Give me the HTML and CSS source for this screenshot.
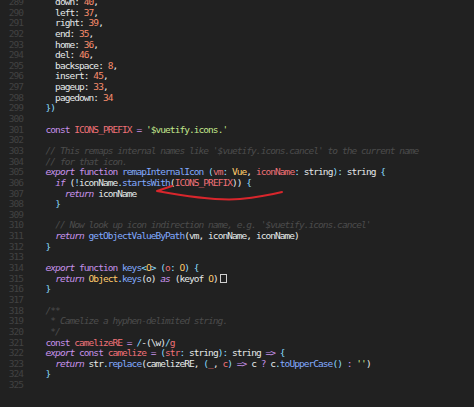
FILE: index.html
```html
<!doctype html>
<html lang="en">
<head>
  <meta charset="UTF-8" />
  <title>helpers.ts</title>
  <link rel="stylesheet" href="styles.css">
</head>
<body>

<section class="screen">
  <div class="editor">
    <div class="line"><span class="num">289</span><span class="code">    down: <span class="n">40</span>,</span></div>
    <div class="line"><span class="num">290</span><span class="code">    left: <span class="n">37</span>,</span></div>
    <div class="line"><span class="num">291</span><span class="code">    right: <span class="n">39</span>,</span></div>
    <div class="line"><span class="num">292</span><span class="code">    end: <span class="n">35</span>,</span></div>
    <div class="line"><span class="num">293</span><span class="code">    home: <span class="n">36</span>,</span></div>
    <div class="line"><span class="num">294</span><span class="code">    del: <span class="n">46</span>,</span></div>
    <div class="line"><span class="num">295</span><span class="code">    backspace: <span class="n">8</span>,</span></div>
    <div class="line"><span class="num">296</span><span class="code">    insert: <span class="n">45</span>,</span></div>
    <div class="line"><span class="num">297</span><span class="code">    pageup: <span class="n">33</span>,</span></div>
    <div class="line"><span class="num">298</span><span class="code">    pagedown: <span class="n">34</span></span></div>
    <div class="line"><span class="num">299</span><span class="code">  <span class="p">})</span></span></div>
    <div class="line"><span class="num">300</span><span class="code"></span></div>
    <div class="line"><span class="num">301</span><span class="code">  <span class="k">const</span> <span class="v">ICONS_PREFIX</span> <span class="k">=</span> <span class="s">'$vuetify.icons.'</span></span></div>
    <div class="line"><span class="num">302</span><span class="code"></span></div>
    <div class="line"><span class="num">303</span><span class="code">  <span class="c">// This remaps internal names like '$vuetify.icons.cancel' to the current name</span></span></div>
    <div class="line"><span class="num">304</span><span class="code">  <span class="c">// for that icon.</span></span></div>
    <div class="line"><span class="num">305</span><span class="code">  <span class="ki">export</span> <span class="k">function</span> <span class="f">remapInternalIcon</span> <span class="p">(</span><span class="v">vm</span><span class="p">:</span> <span class="t">Vue</span>, <span class="v">iconName</span><span class="p">:</span> string<span class="p">):</span> string <span class="p">{</span></span></div>
    <div class="line"><span class="num">306</span><span class="code">    <span class="ki">if</span> (<span class="p">!</span>iconName<span class="p">.</span><span class="f">startsWith</span>(<span class="v">ICONS_PREFIX</span>)) <span class="p">{</span></span></div>
    <div class="line"><span class="num">307</span><span class="code">      <span class="ki">return</span> iconName</span></div>
    <div class="line"><span class="num">308</span><span class="code">    <span class="p">}</span></span></div>
    <div class="line"><span class="num">309</span><span class="code"></span></div>
    <div class="line"><span class="num">310</span><span class="code">    <span class="c">// Now look up icon indirection name, e.g. '$vuetify.icons.cancel'</span></span></div>
    <div class="line"><span class="num">311</span><span class="code">    <span class="ki">return</span> <span class="f">getObjectValueByPath</span>(vm, iconName, iconName)</span></div>
    <div class="line"><span class="num">312</span><span class="code">  <span class="p">}</span></span></div>
    <div class="line"><span class="num">313</span><span class="code"></span></div>
    <div class="line"><span class="num">314</span><span class="code">  <span class="ki">export</span> <span class="k">function</span> <span class="f">keys</span><span class="p">&lt;</span><span class="t">O</span><span class="p">&gt;</span> <span class="p">(</span><span class="v">o</span><span class="p">:</span> <span class="t">O</span><span class="p">)</span> <span class="p">{</span></span></div>
    <div class="line"><span class="num">315</span><span class="code">    <span class="ki">return</span> <span class="t">Object</span><span class="p">.</span><span class="f">keys</span>(o) <span class="ki">as</span> (keyof <span class="t">O</span>)<span class="cursor"></span></span></div>
    <div class="line"><span class="num">316</span><span class="code">  <span class="p">}</span></span></div>
    <div class="line"><span class="num">317</span><span class="code"></span></div>
    <div class="line"><span class="num">318</span><span class="code">  <span class="c">/**</span></span></div>
    <div class="line"><span class="num">319</span><span class="code">  <span class="c"> * Camelize a hyphen-delimited string.</span></span></div>
    <div class="line"><span class="num">320</span><span class="code">  <span class="c"> */</span></span></div>
    <div class="line"><span class="num">321</span><span class="code">  <span class="k">const</span> <span class="v">camelizeRE</span> <span class="k">=</span> <span class="p">/</span>-(\w)<span class="p">/</span><span class="v">g</span></span></div>
    <div class="line"><span class="num">322</span><span class="code">  <span class="ki">export</span> <span class="k">const</span> <span class="v">camelize</span> <span class="k">=</span> <span class="p">(</span><span class="v">str</span><span class="p">:</span> string<span class="p">):</span> string <span class="k">=&gt;</span> <span class="p">{</span></span></div>
    <div class="line"><span class="num">323</span><span class="code">    <span class="ki">return</span> str<span class="p">.</span><span class="f">replace</span>(camelizeRE, <span class="p">(</span><span class="v">_</span>, <span class="v">c</span><span class="p">)</span> <span class="k">=&gt;</span> c <span class="k">?</span> c<span class="p">.</span><span class="f">toUpperCase</span><span class="p">()</span> <span class="k">:</span> <span class="s">''</span>)</span></div>
    <div class="line"><span class="num">324</span><span class="code">  <span class="p">}</span></span></div>
    <div class="line"><span class="num">325</span><span class="code"></span></div>
  </div>

  <!--Red hand-drawn arrow-->
  <svg class="mark" width="474" height="407">
    <path d="M172,186 L157,191 C190,197 220,201 240,199 S270,195 282,192" />
  </svg>
</section>

</body>
</html>
```

FILE: styles.css
```css
html, body {
  margin: 0;
  padding: 0;
  background: #212121;
}
.screen {
  position: relative;
  width: 474px;
  height: 407px;
  overflow: hidden;
  background: #212121;
}
.editor {
  margin-top: -3px;
  font-family: "DejaVu Sans Mono", "Liberation Mono", monospace;
  font-size: 9.5px;
  letter-spacing: -0.94px;
  line-height: 10.65px;
  color: #e6eaea;
}
.line {
  display: flex;
  height: 10.65px;
}
.num {
  width: 23px;
  margin-right: 13px;
  text-align: right;
  color: #414141;
}
.code {
  white-space: pre;
}
/*Syntax colours*/
.k {
  color: #c792ea;
}
.ki {
  color: #c792ea;
  font-style: italic;
}
.f {
  color: #82aaff;
}
.s {
  color: #c3e88d;
}
.n {
  color: #f78c6c;
}
.v {
  color: #f07178;
}
.t {
  color: #ffcb6b;
}
.p {
  color: #89ddff;
}
.c {
  color: #4c4c4c;
  font-style: italic;
}
.cursor {
  display: inline-block;
  width: 5px;
  height: 7px;
  margin-left: 2px;
  border: 1px solid #d0d0d0;
  vertical-align: -1px;
}
.mark {
  position: absolute;
  top: 0;
  left: 0;
}
.mark path {
  fill: none;
  stroke: #d8262c;
  stroke-width: 2;
  stroke-linecap: round;
  stroke-linejoin: round;
}
```
